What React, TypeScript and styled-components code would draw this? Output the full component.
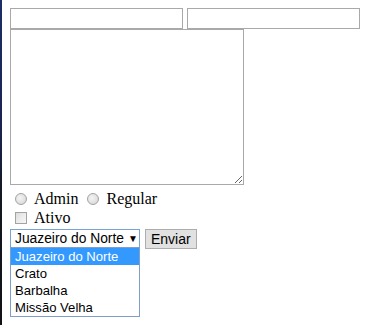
import React from "react";
import styled, { createGlobalStyle } from "styled-components";

const Global = createGlobalStyle`
  html {
    background:
      linear-gradient(180deg, #1d2d66 0%, #1a2450 40%, #141820 60%, #101216 100%) 0 0 / 2px 100% no-repeat,
      #ffffff;
    min-height: 100%;
  }
  body {
    margin: 8px 8px 8px 10px;
    font-family: "Liberation Serif", "Times New Roman", serif;
    font-size: 16px;
    color: #000;
  }
`;

const Form = styled.form`
  display: flex;
  flex-direction: column;
  align-items: flex-start;
`;

const InputRow = styled.div`
  display: flex;
  gap: 4px;
`;

const TextInput = styled.input`
  box-sizing: border-box;
  width: 173px;
  height: 21px;
  margin: 0;
  padding: 1px 2px;
  border: 1px solid #a9a9a9;
  font: 13.33px "Liberation Sans", Arial, sans-serif;
  outline: none;
`;

const TextArea = styled.textarea`
  box-sizing: border-box;
  display: block;
  width: 234px;
  height: 156px;
  margin: 0;
  padding: 2px;
  border: 1px solid #a9a9a9;
  font: 13.33px "Liberation Mono", monospace;
  outline: none;
`;

const OptionRow = styled.div<{ $top: number; $height: number }>`
  display: flex;
  align-items: center;
  height: ${(p) => p.$height}px;
  margin-top: ${(p) => p.$top}px;
  gap: 4px;
  line-height: 18px;
`;

const Choice = styled.label`
  display: flex;
  align-items: center;
`;

const Radio = styled.input.attrs({ type: "radio" })`
  appearance: none;
  box-sizing: border-box;
  width: 12px;
  height: 12px;
  margin: 0 7px 0 5px;
  border: 1px solid #a3a3a3;
  border-radius: 50%;
  background: radial-gradient(circle at 40% 40%, #f4f4f4 0%, #e2e2e2 55%, #d0d0d0 100%);
`;

const Check = styled.input.attrs({ type: "checkbox" })`
  appearance: none;
  box-sizing: border-box;
  width: 12px;
  height: 12px;
  margin: 0 7px 0 5px;
  border: 1px solid #a3a3a3;
  border-radius: 0;
  background: linear-gradient(135deg, #dcdcdc 0%, #ececec 50%, #f6f6f6 100%);
`;

const Controls = styled.div`
  display: flex;
  align-items: flex-start;
  gap: 5px;
  margin-top: 2px;
`;

const SelectColumn = styled.div`
  display: flex;
  flex-direction: column;
`;

const SelectBox = styled.div`
  box-sizing: border-box;
  width: 130px;
  height: 19px;
  display: flex;
  align-items: center;
  gap: 4px;
  padding: 0 4px;
  border: 1px solid #7aa4d6;
  background: #fff;
  font: 13.8px "Liberation Sans", Arial, sans-serif;
  white-space: nowrap;
`;

const Arrow = styled.span`
  font-size: 10px;
  line-height: 1;
`;

const ListBox = styled.ul`
  box-sizing: border-box;
  width: 130px;
  margin: -1px 0 0;
  padding: 0;
  list-style: none;
  border: 1px solid #7f9fc9;
  background: #fff;
  font: 13.1px "Liberation Sans", Arial, sans-serif;
`;

const Item = styled.li<{ $active?: boolean }>`
  height: 17px;
  line-height: 17px;
  padding: 0 4px;
  white-space: nowrap;
  background: ${(p) => (p.$active ? "#3399ff" : "transparent")};
  color: ${(p) => (p.$active ? "#fff" : "#000")};
`;

const Button = styled.button`
  box-sizing: border-box;
  height: 20px;
  padding: 0 5px;
  margin: 0;
  border: 1px solid #adadad;
  background: #e1e1e1;
  font: 14px "Liberation Sans", Arial, sans-serif;
  color: #000;
`;

const cities = ["Juazeiro do Norte", "Crato", "Barbalha", "Missão Velha"];

export default function App() {
  return (
    <>
      <Global />
      <Form onSubmit={(e) => e.preventDefault()}>
        <InputRow>
          <TextInput type="text" />
          <TextInput type="text" />
        </InputRow>
        <TextArea />
        <OptionRow $top={4} $height={19}>
          <Choice>
            <Radio name="role" />
            Admin
          </Choice>
          <Choice>
            <Radio name="role" />
            Regular
          </Choice>
        </OptionRow>
        <OptionRow $top={0} $height={19}>
          <Choice>
            <Check />
            Ativo
          </Choice>
        </OptionRow>
        <Controls>
          <SelectColumn>
            <SelectBox>
              <span>Juazeiro do Norte</span>
              <Arrow>▼</Arrow>
            </SelectBox>
            <ListBox>
              {cities.map((c, i) => (
                <Item key={c} $active={i === 0}>
                  {c}
                </Item>
              ))}
            </ListBox>
          </SelectColumn>
          <Button type="submit">Enviar</Button>
        </Controls>
      </Form>
    </>
  );
}
